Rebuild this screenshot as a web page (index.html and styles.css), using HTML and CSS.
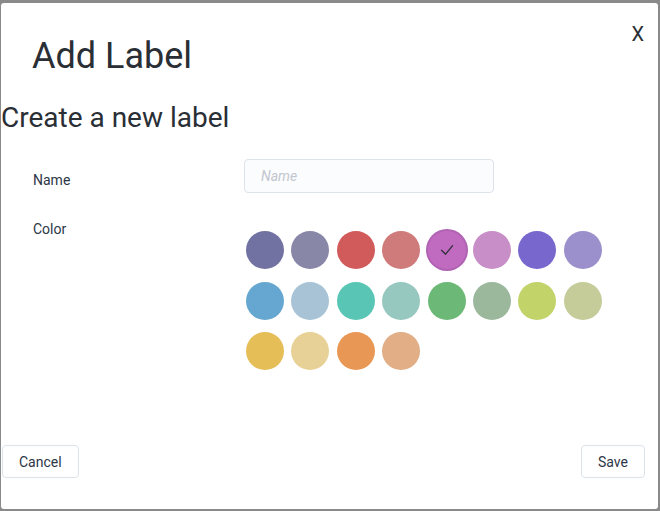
FILE: index.html
```html
<!DOCTYPE html>
<html lang="en">
<head>
<meta charset="utf-8">
<title>Add Label</title>
<link rel="stylesheet" href="styles.css">
</head>
<body>
<div class="modal">
  <div class="modal-header">
    <h1 class="modal-title">Add Label</h1>
    <button class="close" type="button">X</button>
  </div>
  <h2 class="subtitle">Create a new label</h2>
  <form class="form">
    <label class="field-label" for="name">Name</label>
    <input class="field-input" id="name" type="text" placeholder="Name">
    <div class="field-label field-label-color">Color</div>
    <div class="swatches">
      <span class="swatch" style="background:#7272a2"></span>
      <span class="swatch" style="background:#8987a8"></span>
      <span class="swatch" style="background:#d15b5a"></span>
      <span class="swatch" style="background:#d07b7b"></span>
      <span class="swatch swatch-selected" style="background:#c16bc0">
        <svg class="check" viewBox="0 0 14 14" width="14" height="14"><path d="M1.5 7.2 L5.6 11.2 L12.6 2.6" fill="none" stroke="#2f2f3a" stroke-width="1.3" stroke-linecap="round" stroke-linejoin="round"/></svg>
      </span>
      <span class="swatch" style="background:#c78ec7"></span>
      <span class="swatch" style="background:#7867cc"></span>
      <span class="swatch" style="background:#9b90cc"></span>
      <span class="swatch" style="background:#65a7d0"></span>
      <span class="swatch" style="background:#a7c3d5"></span>
      <span class="swatch" style="background:#59c6b5"></span>
      <span class="swatch" style="background:#96c8bf"></span>
      <span class="swatch" style="background:#6cb977"></span>
      <span class="swatch" style="background:#9bb89d"></span>
      <span class="swatch" style="background:#c2d36a"></span>
      <span class="swatch" style="background:#c5cc9a"></span>
      <span class="swatch" style="background:#e6be58"></span>
      <span class="swatch" style="background:#e8d196"></span>
      <span class="swatch" style="background:#e99755"></span>
      <span class="swatch" style="background:#e1ae86"></span>
    </div>
  </form>
  <div class="modal-footer">
    <button class="btn" type="button">Cancel</button>
    <button class="btn" type="button">Save</button>
  </div>
</div>
</body>
</html>
```

FILE: styles.css
```css
html, body {
  margin: 0;
  padding: 0;
}
body {
  background: #8a8a8a;
  height: 511px;
  overflow: hidden;
  font-family: Roboto, "Liberation Sans", sans-serif;
  color: #2c313a;
}
.modal {
  margin: 3px 2px 0 1px;
  height: 506px;
  background: #ffffff;
  border-radius: 3px;
  display: flex;
  flex-direction: column;
  box-sizing: border-box;
}
.modal-header {
  display: flex;
  justify-content: space-between;
  align-items: flex-start;
}
.modal-title {
  margin: 32px 0 0 31px;
  font-size: 36px;
  line-height: 42px;
  font-weight: 400;
  color: #2a2e35;
}
.close {
  margin: 19px 14px 0 0;
  padding: 0;
  border: 0;
  background: transparent;
  font-family: Roboto, "Liberation Sans", sans-serif;
  font-size: 20px;
  line-height: 24px;
  color: #2a2e35;
  cursor: pointer;
}
.subtitle {
  margin: 24px 0 0 0;
  font-size: 28px;
  line-height: 33px;
  font-weight: 400;
  color: #2a2e35;
}
.form {
  margin: 25px 0 0 0;
  padding-left: 32px;
  display: grid;
  grid-template-columns: 211px 250px;
  row-gap: 28px;
  align-items: start;
}
.field-label {
  font-size: 14px;
  line-height: 16px;
  color: #2d3646;
  padding-top: 13px;
}
.field-label-color {
  padding-top: 0;
}
.field-input {
  box-sizing: border-box;
  width: 250px;
  height: 34px;
  margin: 0;
  padding: 0 16px;
  border: 1px solid #dde3ea;
  border-radius: 4px;
  background: #fbfcfe;
  font-family: Roboto, "Liberation Sans", sans-serif;
  font-size: 14px;
  color: #2d3646;
  outline: none;
}
.field-input::placeholder {
  font-style: italic;
  color: #c2c6ce;
}
.swatches {
  margin: 10px 0 0 2px;
  display: grid;
  grid-template-columns: repeat(8, 38px);
  column-gap: 7.4px;
  row-gap: 12.5px;
  width: 370px;
}
.swatch {
  width: 38px;
  height: 38px;
  border-radius: 50%;
  display: flex;
  align-items: center;
  justify-content: center;
}
.swatch-selected {
  box-shadow: 0 0 0 2px #b062b3;
}
.check {
  display: block;
}
.modal-footer {
  margin-top: auto;
  padding: 0 13px 31px 1px;
  display: flex;
  justify-content: space-between;
}
.btn {
  box-sizing: border-box;
  height: 33px;
  padding: 0 16px;
  border: 1px solid #dde3ea;
  border-radius: 4px;
  background: #ffffff;
  font-family: Roboto, "Liberation Sans", sans-serif;
  font-size: 14px;
  color: #2d3646;
  cursor: pointer;
}
```
